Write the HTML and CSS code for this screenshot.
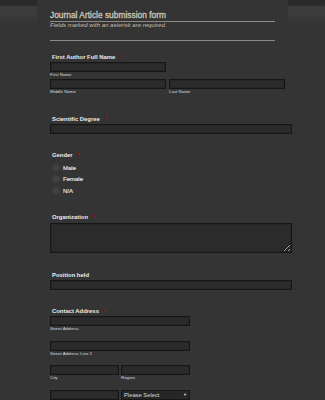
FILE: index.html
```html
<!DOCTYPE html>
<html lang="en">
<head>
<meta charset="utf-8">
<title>Journal Article submission form</title>
<link rel="stylesheet" href="styles.css">
</head>
<body>
<div class="page">
  <form class="form">
    <div class="header">
      <h1 class="title">Journal Article submission form</h1>
      <p class="subtitle">Fields marked with an asterisk are required.</p>
    </div>

    <div class="field f-author">
      <label class="label">First Author Full Name <span class="req">*</span></label>
      <div class="row">
        <div class="sub w-name"><input class="input" type="text"><span class="sublabel">First Name</span></div>
      </div>
      <div class="row row-next">
        <div class="sub w-name"><input class="input" type="text"><span class="sublabel">Middle Name</span></div>
        <div class="sub w-name"><input class="input" type="text"><span class="sublabel">Last Name</span></div>
      </div>
    </div>

    <div class="field f-degree">
      <label class="label">Scientific Degree <span class="req">*</span></label>
      <input class="input wide" type="text">
    </div>

    <div class="field f-gender">
      <label class="label">Gender <span class="req">*</span></label>
      <div class="radios">
        <label class="radio"><span class="dot"></span>Male</label>
        <label class="radio"><span class="dot"></span>Female</label>
        <label class="radio"><span class="dot"></span>N/A</label>
      </div>
    </div>

    <div class="field f-org">
      <label class="label">Organization <span class="req">*</span></label>
      <textarea class="textarea wide"></textarea>
    </div>

    <div class="field f-position">
      <label class="label">Position held</label>
      <input class="input wide" type="text">
    </div>

    <div class="field f-address">
      <label class="label">Contact Address <span class="req">*</span></label>
      <div class="row">
        <div class="sub w-street"><input class="input" type="text"><span class="sublabel">Street Address</span></div>
      </div>
      <div class="row row-addr">
        <div class="sub w-street"><input class="input" type="text"><span class="sublabel">Street Address Line 2</span></div>
      </div>
      <div class="row row-addr2 pair">
        <div class="sub w-city"><input class="input" type="text"><span class="sublabel">City</span></div>
        <div class="sub w-region"><input class="input" type="text"><span class="sublabel">Region</span></div>
      </div>
      <div class="row row-addr3 pair">
        <div class="sub w-city"><input class="input" type="text"><span class="sublabel">Postal / Zip Code</span></div>
        <div class="sub w-region">
          <div class="select"><span>Please Select</span><span class="arrow">▼</span></div>
          <span class="sublabel">Country</span>
        </div>
      </div>
    </div>
  </form>
</div>
</body>
</html>
```

FILE: styles.css
```css
html {
  overflow: hidden;
}

body {
  margin: 0;
  font-family: "Liberation Sans", Arial, sans-serif;
  background-color: #333333;
  background-image:
    linear-gradient(to bottom, #292929 0, #2a2a2a 5px, #3c3c3c 7px, #3b3b3b 14px, rgba(51, 51, 51, 0.6) 26px, rgba(51, 51, 51, 0) 38px),
    repeating-conic-gradient(#303030 0 25%, #363636 0 50%);
  background-size: 100% 40px, 2px 2px;
  background-repeat: no-repeat, repeat;
  min-height: 400px;
}

.page {
  width: 251px;
  margin: 0 auto;
  background: #343434;
  min-height: 600px;
}

.form {
  padding: 10px 0 20px 13px;
}

.header {
  width: 225px;
  border-bottom: 1px solid #8e8a82;
  padding-bottom: 11px;
}

.title {
  margin: 0;
  font-size: 8.4px;
  line-height: 11px;
  font-weight: normal;
  color: #cdc6b8;
  border-bottom: 1px solid #8e8a82;
  -webkit-text-stroke: 0.3px #cdc6b8;
}

.subtitle {
  margin: 0;
  font-size: 6px;
  line-height: 7px;
  font-style: italic;
  color: #c4beb3;
}

.field {
  display: flex;
  flex-direction: column;
  align-items: flex-start;
}

.label {
  display: block;
  padding-left: 2px;
  font-size: 5.9px;
  line-height: 8px;
  font-weight: bold;
  color: #ececec;
  margin-bottom: 1px;
}

.req {
  color: #c40000;
  margin-left: 3px;
}

.row {
  display: flex;
}

.pair {
  gap: 2px;
}

.row-next {
  margin-top: 2px;
  gap: 3px;
}

.row-addr {
  margin-top: 10px;
}

.row-addr2 {
  margin-top: 9px;
}

.row-addr3 {
  margin-top: 10px;
}

.sub {
  display: flex;
  flex-direction: column;
}

.w-name { width: 116px; }
.w-street { width: 140px; }
.w-city { width: 69px; }
.w-region { width: 69px; }

.input,
.textarea,
.select {
  box-sizing: border-box;
  display: block;
  margin: 0;
  padding: 0 2px;
  width: 100%;
  height: 10px;
  border: 1px solid #161616;
  background: #2b2b2b;
  box-shadow: inset 0 0 0 1px #262626;
  color: #ddd;
  font-family: inherit;
  font-size: 6px;
  outline: none;
}

.wide {
  width: 242px;
}

.textarea {
  height: 30px;
  resize: both;
}

.sublabel {
  display: block;
  font-size: 4.4px;
  line-height: 5px;
  color: #dcdcdc;
}

.f-author { margin-top: 12px; }
.f-degree { margin-top: 21px; }
.f-gender { margin-top: 17px; }
.f-org { margin-top: 16px; }
.f-org .label { margin-bottom: 2px; }
.f-position { margin-top: 18px; }
.f-address { margin-top: 17px; }

.radios {
  display: flex;
  flex-direction: column;
  margin-top: 2px;
  padding-left: 2px;
}

.radio {
  display: flex;
  align-items: center;
  height: 11.5px;
  font-size: 6px;
  color: #e6e6e6;
  -webkit-text-stroke: 0.15px #e6e6e6;
}

.dot {
  width: 8px;
  height: 8px;
  border-radius: 50%;
  background: #414141;
  box-shadow: inset 0 0 0 1px #3a3a3a;
  margin-right: 3px;
}

.select {
  display: flex;
  align-items: center;
  justify-content: space-between;
  background: #262626;
  color: #d8d8d8;
  font-size: 5.8px;
  padding: 0 2px 0 2px;
}

.arrow {
  font-size: 4px;
  color: #ddd;
}
```
